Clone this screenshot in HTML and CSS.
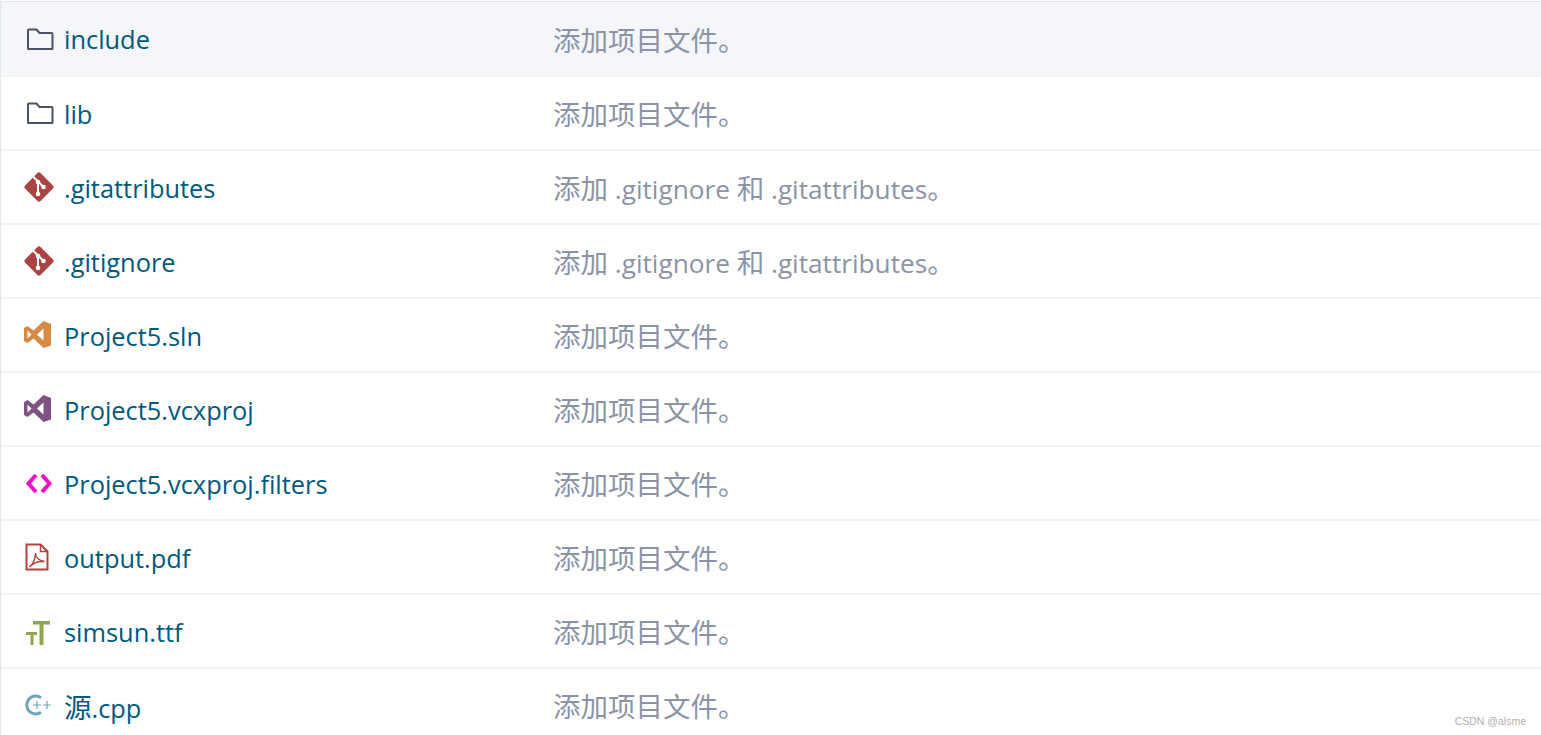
FILE: index.html
```html
<!DOCTYPE html>
<html lang="en">
<head>
    <meta charset="UTF-8">
    <meta name="viewport" content="width=device-width, initial-scale=1.0">
    <title>Repository files</title>
    <link rel="stylesheet" href="styles.css">
</head>
<body>
    <!-- File list -->
    <div class="file-list">
        <div class="row row-hover">
            <span class="icon"><svg width="30" height="22" viewBox="-2 0 30 22"><path class="folder" d="M2 20.500V2.500a1 1 0 0 1 1-1h7.500l3 3.500h12a1 1 0 0 1 1 1v14.500a.5.5 0 0 1-.5.5H2.500a.5.5 0 0 1-.5-.5z"/></svg></span>
            <a class="name">include</a>
            <span class="msg cjk">添加项目文件。</span>
        </div>
        <div class="row">
            <span class="icon"><svg width="30" height="22" viewBox="-2 0 30 22"><path class="folder" d="M2 20.500V2.500a1 1 0 0 1 1-1h7.500l3 3.500h12a1 1 0 0 1 1 1v14.500a.5.5 0 0 1-.5.5H2.500a.5.5 0 0 1-.5-.5z"/></svg></span>
            <a class="name">lib</a>
            <span class="msg cjk">添加项目文件。</span>
        </div>
        <div class="row">
            <span class="icon"><svg width="30" height="30" viewBox="0 0 30 30"><path fill="#a94442" d="M13.200 1.300 1.300 13.200a2.500 2.500 0 0 0 0 3.600l11.900 11.900a2.500 2.500 0 0 0 3.600 0l11.900-11.900a2.500 2.500 0 0 0 0-3.600L16.800 1.300a2.500 2.500 0 0 0-3.600 0z"/><path stroke="#fff" stroke-width="2" fill="none" d="M9 4.500 19 14.500M14 9.500V22"/><circle cx="14" cy="10" r="2.300" fill="#fff"/><circle cx="19.500" cy="15" r="2.300" fill="#fff"/><circle cx="14" cy="22" r="2.300" fill="#fff"/></svg></span>
            <a class="name">.gitattributes</a>
            <span class="msg"><span class="cjk">添加</span> .gitignore <span class="cjk">和</span> .gitattributes<span class="cjk">。</span></span>
        </div>
        <div class="row">
            <span class="icon"><svg width="30" height="30" viewBox="0 0 30 30"><path fill="#a94442" d="M13.200 1.300 1.300 13.200a2.500 2.500 0 0 0 0 3.600l11.900 11.900a2.500 2.500 0 0 0 3.600 0l11.900-11.900a2.500 2.500 0 0 0 0-3.600L16.800 1.300a2.500 2.500 0 0 0-3.600 0z"/><path stroke="#fff" stroke-width="2" fill="none" d="M9 4.500 19 14.500M14 9.500V22"/><circle cx="14" cy="10" r="2.300" fill="#fff"/><circle cx="19.500" cy="15" r="2.300" fill="#fff"/><circle cx="14" cy="22" r="2.300" fill="#fff"/></svg></span>
            <a class="name">.gitignore</a>
            <span class="msg"><span class="cjk">添加</span> .gitignore <span class="cjk">和</span> .gitattributes<span class="cjk">。</span></span>
        </div>
        <div class="row">
            <span class="icon"><svg width="28" height="28" viewBox="0 0 28 28"><path fill="#d68a45" fill-rule="evenodd" d="M19.500 0 27 3v21.500L19.500 27 9.500 17.500 3.500 22 0 20V7l3.500-2 6 4.500zM3.500 9.500v8l4-4zM19.500 7.500l-6.500 6 6.500 6z"/></svg></span>
            <a class="name">Project5.sln</a>
            <span class="msg cjk">添加项目文件。</span>
        </div>
        <div class="row">
            <span class="icon"><svg width="28" height="28" viewBox="0 0 28 28"><path fill="#7f5283" fill-rule="evenodd" d="M19.500 0 27 3v21.500L19.500 27 9.500 17.500 3.500 22 0 20V7l3.500-2 6 4.500zM3.500 9.500v8l4-4zM19.500 7.500l-6.500 6 6.500 6z"/></svg></span>
            <a class="name">Project5.vcxproj</a>
            <span class="msg cjk">添加项目文件。</span>
        </div>
        <div class="row">
            <span class="icon"><svg width="29" height="24" viewBox="-1 -2 29 24"><path fill="none" stroke="#f30fc6" stroke-width="4" d="M11 2 3.500 10.500 11 19M17 2l7.500 8.500L17 19"/></svg></span>
            <a class="name">Project5.vcxproj.filters</a>
            <span class="msg cjk">添加项目文件。</span>
        </div>
        <div class="row">
            <span class="icon"><svg width="25" height="28" viewBox="-1 0 25 28"><path fill="none" stroke="#b0433f" stroke-width="2" d="M1.500 1.500h14l7 7v18h-21z"/><path fill="none" stroke="#b0433f" stroke-width="1.500" d="M15.500 1.500v7h7"/><path fill="none" stroke="#b0433f" stroke-width="1.500" d="M4.500 24c3.500-3 6-8 6-14 0 4 3.500 7.500 9 8.500-5-.5-11 1-15 5.500z"/></svg></span>
            <a class="name">output.pdf</a>
            <span class="msg cjk">添加项目文件。</span>
        </div>
        <div class="row">
            <span class="icon"><svg width="28" height="28" viewBox="0 0 28 28"><path fill="#8ea552" d="M9 4h17v3.500h-6.500V28h-4V7.500H9zM2 15h11v3H9.500v10h-3V18H2z"/></svg></span>
            <a class="name">simsun.ttf</a>
            <span class="msg cjk">添加项目文件。</span>
        </div>
        <div class="row">
            <span class="icon"><svg width="28" height="24" viewBox="0 0 28 24"><path fill="none" stroke="#6fa3b8" stroke-width="3" d="M17 4.700A9 9 0 1 0 17 19.300"/><path fill="none" stroke="#6fa3b8" stroke-width="1.200" d="M9 12h8M13 8v8M19 12h8M23 8v8"/></svg></span>
            <a class="name"><span class="cjk">源</span>.cpp</a>
            <span class="msg cjk">添加项目文件。</span>
        </div>
    </div>
    <div class="watermark">CSDN @alsme</div>
</body>
</html>
```

FILE: styles.css
```css
/* Base */
html, body {
    height: 100%;
}

body {
    margin: 0;
    background-color: #fff;
    font-family: "Open Sans", "Noto Sans CJK SC", sans-serif;
    overflow: hidden;
    position: relative;
}

/* File list */
.file-list {
    border-top: 1px solid #e3e6ec;
    border-left: 1px solid #e3e6ec;
    margin-top: 1px;
}

.row {
    display: flex;
    align-items: center;
    height: 72px;
    border-bottom: 2px solid #f1f3f5;
    padding-left: 23px;
}

.row-hover {
    height: 73px;
    background-color: #f4f6fa;
}

.icon {
    width: 40px;
    display: flex;
    align-items: center;
}

.folder {
    fill: none;
    stroke: #4a5264;
    stroke-width: 2;
}

.name {
    width: 489px;
    padding-top: 1px;
    color: #005980;
    font-size: 25.4px;
}

.msg {
    color: #8c93a6;
    font-size: 26.2px;
}

/* Chinese text runs a little larger than the latin next to it */
.cjk {
    font-size: 27.5px;
}

.watermark {
    position: absolute;
    right: 15px;
    bottom: 8px;
    color: #b0b0b0;
    font-size: 10.5px;
    font-family: "Liberation Sans", sans-serif;
}
```
